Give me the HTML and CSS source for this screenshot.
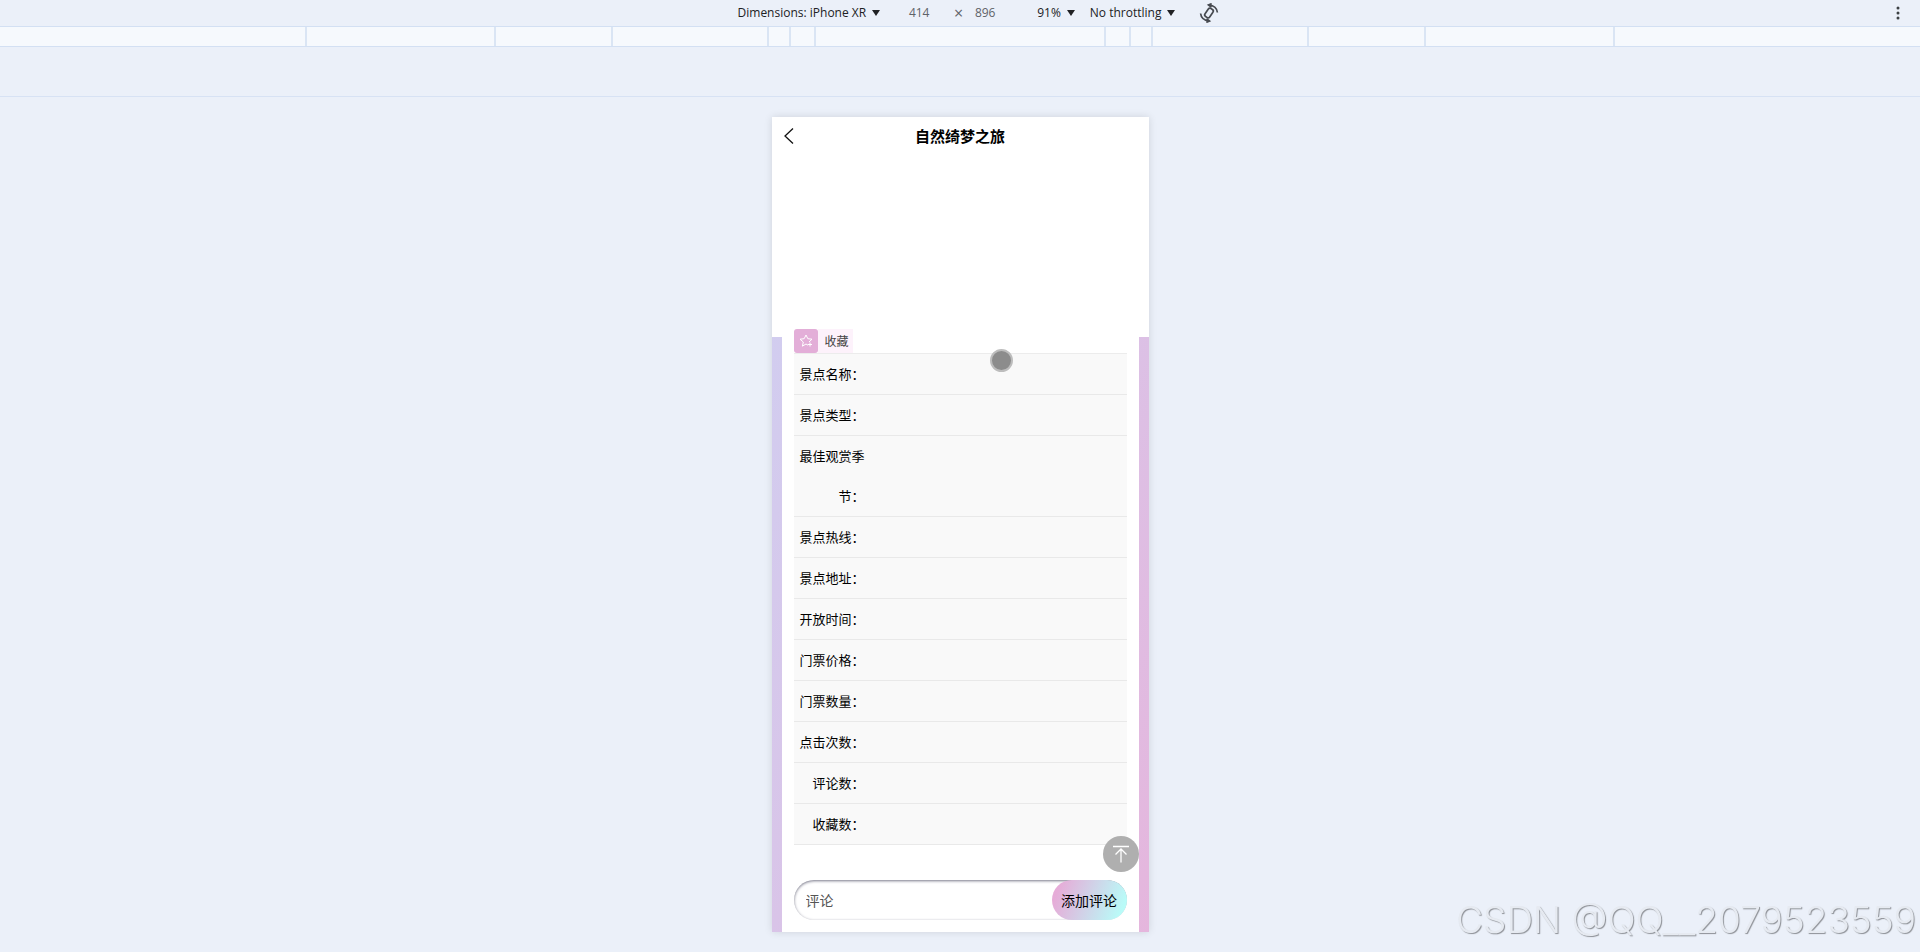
FILE: index.html
```html
<!DOCTYPE html>
<html lang="zh-CN">
<head>
    <meta charset="UTF-8">
    <meta name="viewport" content="width=device-width, initial-scale=1.0">
    <title>自然绮梦之旅</title>
    <link rel="stylesheet" href="styles.css">
</head>
<body>
    <header class="toolbar">
        <div class="toolbar-main">
            <button type="button" class="tool device">Dimensions: iPhone XR <span class="caret"></span></button>
            <input class="size" type="text" value="414" aria-label="Width">
            <span class="times">×</span>
            <input class="size" type="text" value="896" aria-label="Height">
            <button type="button" class="tool zoom">91% <span class="caret"></span></button>
            <button type="button" class="tool">No throttling <span class="caret"></span></button>
            <button type="button" class="tool rotate" aria-label="Rotate">
                <svg width="20" height="20" viewBox="0 0 20 20" fill="none" stroke="#474a50" stroke-width="1.7">
                    <rect x="7.2" y="5.2" width="5.600" height="9.600" rx="2" transform="rotate(35 10 10)"/>
                    <path d="M1.600 10.500c.4 3.800 3.400 7 8.600 7.500M18.400 9.500c-.4-3.800-3.400-7-8.600-7.500"/>
                    <path d="M7.500 15.800l3 2.200-3.200 1.400M12.500 4.200 9.500 2l3.200-1.400"/>
                </svg>
            </button>
        </div>
        <button type="button" class="tool more" aria-label="More options">
            <svg width="4" height="14" viewBox="0 0 4 14" fill="#3c4043">
                <circle cx="2" cy="2" r="1.5"/><circle cx="2" cy="7" r="1.5"/><circle cx="2" cy="12" r="1.5"/>
            </svg>
        </button>
    </header>

    <div class="media-bar">
        <i class="fill"></i><i class="w189"></i><i class="w117"></i><i class="w156"></i><i class="w22"></i><i class="w25"></i>
        <i class="w290"></i>
        <i class="w25"></i><i class="w22"></i><i class="w156"></i><i class="w117"></i><i class="w189"></i><i class="fill"></i>
    </div>
    <div class="ruler"></div>

    <main class="stage">
        <div class="phone">
            <div class="top">
                <div class="nav">
                    <button type="button" class="back" aria-label="返回">
                        <svg width="10" height="16" viewBox="0 0 10 16" fill="none" stroke="#111" stroke-width="1.3"><path d="M9 .5 1 8l8 7.500"/></svg>
                    </button>
                    <h1>自然绮梦之旅</h1>
                </div>
            </div>
            <div class="content">
                <button type="button" class="collect">
                    <span class="star">
                        <svg width="14" height="14" viewBox="0 0 14 14" fill="none" stroke="#fff" stroke-width="1" stroke-linejoin="round">
                            <path d="M9 11.2 7 10l-3.6 2.2.9-4.2L1 5.2l4.2-.5L7 1l1.8 3.7 4.2.5-3 2.8"/>
                            <path d="M11 8.5v4M9 10.5h4"/>
                        </svg>
                    </span>
                    <span class="collect-text">收藏</span>
                </button>
                <dl class="info">
                    <div><dt>景点名称：</dt><dd></dd></div>
                    <div><dt>景点类型：</dt><dd></dd></div>
                    <div><dt>最佳观赏季节：</dt><dd></dd></div>
                    <div><dt>景点热线：</dt><dd></dd></div>
                    <div><dt>景点地址：</dt><dd></dd></div>
                    <div><dt>开放时间：</dt><dd></dd></div>
                    <div><dt>门票价格：</dt><dd></dd></div>
                    <div><dt>门票数量：</dt><dd></dd></div>
                    <div><dt>点击次数：</dt><dd></dd></div>
                    <div><dt>评论数：</dt><dd></dd></div>
                    <div><dt>收藏数：</dt><dd></dd></div>
                </dl>
                <form class="comment">
                    <input type="text" placeholder="评论" aria-label="评论">
                    <button type="button">添加评论</button>
                </form>
                <button type="button" class="to-top" aria-label="回到顶部">
                    <svg width="16" height="18" viewBox="0 0 16 18" fill="none" stroke="#fff" stroke-width="1.3"><path d="M0 1.5h16M8 17.500V4M2.500 9.500 8 4l5.500 5.500"/></svg>
                </button>
            </div>
            <span class="touch"></span>
        </div>
    </main>
    <div class="watermark">CSDN @QQ__2079523559</div>
</body>
</html>
```
FILE: styles.css
```css
* {
    box-sizing: border-box;
}
body {
    margin: 0;
    min-height: 100vh;
    background: #ebf0f9;
    font-family: "Noto Sans CJK SC", sans-serif;
    color: #000;
}
button,
input {
    margin: 0;
    padding: 0;
    border: 0;
    background: none;
    font: inherit;
    color: inherit;
}

/* device toolbar */
.toolbar {
    display: flex;
    align-items: center;
    height: 26px;
    padding-right: 20px;
    font: 12px/20px "Open Sans", "Noto Sans", sans-serif;
    color: #202124;
}
.toolbar-main {
    flex: 1;
    display: flex;
    align-items: center;
    justify-content: center;
    padding-left: 61px;
}
.tool {
    display: flex;
    align-items: center;
    white-space: nowrap;
}
.caret {
    margin-left: 6px;
    border: 4px solid transparent;
    border-top: 6px solid #202124;
    border-bottom: 0;
}
.size {
    width: 44px;
    text-align: center;
    color: #5f6368;
}
.device {
    margin-right: 17px;
}
.times {
    width: 22px;
    font-size: 16px;
    text-align: right;
    color: #5f6368;
}
.zoom {
    margin: 0 15px 0 30px;
}
.rotate {
    margin-left: 24px;
}
.media-bar {
    display: flex;
    height: 21px;
    background: #f6f9fd;
    border-top: 1px solid #d3e0f3;
    border-bottom: 1px solid #d3e0f3;
}
.media-bar i {
    border-left: 2px solid #dae5f4;
}
.media-bar .fill {
    flex: 1;
}
.media-bar .fill:first-child {
    border-left: 0;
}
.w22 { width: 22px; }
.w25 { width: 25px; }
.w117 { width: 117px; }
.w156 { width: 156px; }
.w189 { width: 189px; }
.w290 { width: 290px; }
.ruler {
    height: 50px;
    border-bottom: 1px solid #d7e2f4;
}

/* phone */
.stage {
    display: flex;
    justify-content: center;
    padding: 20px 0;
}
.phone {
    position: relative;
    width: 377px;
    background: linear-gradient(115deg, #cfd0f2, #d9c4e8 50%, #e5b6dd);
    box-shadow: 0 0 8px rgba(0, 0, 0, 0.12);
}
.top {
    height: 220px;
    background: #fff;
}
.nav {
    display: grid;
    grid-template-columns: 34px 1fr 34px;
    align-items: center;
    height: 38px;
}
.back {
    display: flex;
    justify-content: center;
}
.nav h1 {
    margin: 0;
    font-size: 15px;
    line-height: 20px;
    text-align: center;
}
.content {
    position: relative;
    margin: 0 10px;
    padding: 0 12px 12px;
    background: #fff;
}
.collect {
    display: flex;
    margin-top: -8px;
    font-size: 12px;
    line-height: 24px;
    color: #444;
}
.star {
    display: flex;
    align-items: center;
    justify-content: center;
    width: 24px;
    height: 24px;
    border-radius: 3px;
    background: #e3aed8;
}
.collect-text {
    padding: 0 4px 0 7px;
    background: #fdf2fb;
}
.info {
    margin: 0;
    border-top: 1px solid #ececec;
    background: #f9f9f9;
    font-size: 13px;
    line-height: 40px;
}
.info div {
    display: flex;
    padding-left: 6px;
    border-bottom: 1px solid #e9e9e9;
}
.info dt {
    width: 65px;
    text-align: right;
}
.info dd {
    flex: 1;
    margin: 0;
}
.comment {
    display: flex;
    height: 40px;
    margin-top: 35px;
    border-radius: 20px;
    box-shadow: inset 0 1px 3px #778;
    font-size: 14px;
}
.comment input {
    flex: 1;
    min-width: 0;
    padding-left: 12px;
}
.comment input::placeholder {
    color: #555;
}
.comment button {
    width: 75px;
    border-radius: 20px;
    background: linear-gradient(110deg, #e6acd8 10%, #b9fbf8 90%);
}
.to-top {
    position: absolute;
    right: 0;
    bottom: 60px;
    display: flex;
    align-items: center;
    justify-content: center;
    width: 36px;
    height: 36px;
    border-radius: 50%;
    background: #afafaf;
}
.touch {
    position: absolute;
    top: 232px;
    left: 218px;
    width: 23px;
    height: 23px;
    border: 2px solid #bdbdbd;
    border-radius: 50%;
    background: #8c8c8c;
}

.watermark {
    position: fixed;
    right: 4px;
    bottom: 10px;
    font: 300 37px/44px Inter, sans-serif;
    color: #e6eaf1;
    text-shadow: 1px 1px 1px #8d9096;
}
```
